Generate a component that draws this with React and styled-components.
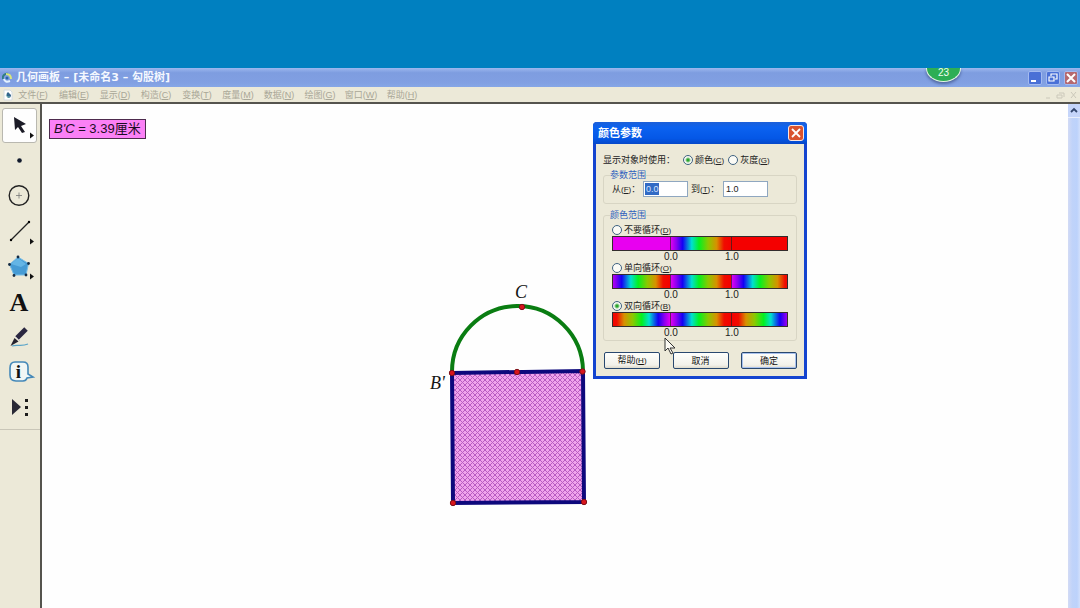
import React from "react";
import styled, { createGlobalStyle, css } from "styled-components";

const GlobalStyle = createGlobalStyle`
  * { box-sizing: border-box; }
  body {
    margin: 0;
    background: #fefefe;
    font-family: "Liberation Sans", "Noto Sans CJK SC", sans-serif;
    overflow: hidden;
  }
  button, input { font-family: inherit; }
`;

const Page = styled.div`
  display: flex;
  flex-direction: column;
  min-height: 100vh;
`;

const TopBand = styled.header`
  height: 68px;
  background: #0080c0;
`;

const TitleBar = styled.div`
  position: relative;
  display: flex;
  align-items: center;
  gap: 4px;
  height: 19px;
  padding: 0 2px;
  background: linear-gradient(#9db8ee, #7e9de0 25%, #819fe2 75%, #86a6e6);
`;

const WindowTitle = styled.h1`
  flex: 1;
  margin: 0;
  color: #f4f8ff;
  font: bold 11px/18px "DejaVu Sans", "Noto Sans CJK SC", sans-serif;
  white-space: pre;
`;

const WindowButton = styled.button`
  display: flex;
  align-items: center;
  justify-content: center;
  width: 14px;
  height: 14px;
  padding: 0;
  border: 1px solid #a3baf0;
  border-radius: 2px;
  background: ${(p) => (p.$close ? "#b5686f" : "#4a70d6")};
`;

const Badge = styled.div`
  position: absolute;
  top: 0;
  right: 119px;
  width: 35px;
  height: 14px;
  border: 1px solid #e4f3e6;
  border-top: 0;
  border-radius: 0 0 18px 18px / 0 0 14px 14px;
  background: #2dae55;
  box-shadow: 0 2px 3px #5067a0;
  color: #f2fff2;
  font-size: 10px;
  line-height: 10px;
  text-align: center;
`;

const MenuBar = styled.nav`
  display: flex;
  align-items: center;
  height: 17px;
  padding: 0 3px;
  background: #ece9d8;
  border-bottom: 2px solid #55544e;
`;

const MenuList = styled.div`
  display: flex;
  flex: 1;
  gap: 7px;
  padding-left: 3px;
`;

const MenuItem = styled.button`
  width: 34px;
  padding: 0;
  border: 0;
  background: none;
  color: #a9a797;
  font-size: 9px;
  line-height: 14px;
  white-space: nowrap;
  text-align: center;
`;

const DocumentButtons = styled.div`
  display: flex;
  gap: 5px;
`;

const Workspace = styled.main`
  display: flex;
  flex: 1;
`;

const ToolBox = styled.aside`
  width: 42px;
  background: #ece9d8;
  border-right: 2px solid #55544e;
`;

const ToolList = styled.div`
  display: flex;
  flex-direction: column;
  padding: 4px 3px 6px 2px;
  border-bottom: 1px solid #c9c6b8;
`;

const ToolButton = styled.button`
  width: 35px;
  height: 35px;
  padding: 0;
  border: 1px solid ${(p) => (p.$active ? "#b9b8b0" : "transparent")};
  border-radius: 3px;
  background: ${(p) => (p.$active ? "#fefefe" : "none")};
  svg { display: block; }
  & + & { margin-top: 1px; height: 34px; }
`;

const Canvas = styled.section`
  position: relative;
  flex: 1;
  background: #fefefe;
`;

const Drawing = styled.svg`
  display: block;
  position: absolute;
  left: 378px;
  top: 166px;
`;

const Measurement = styled.output`
  position: absolute;
  left: 7px;
  top: 15px;
  padding: 0 4px;
  border: 1px solid #4d2a4d;
  background: #fb80f6;
  color: #1c0d24;
  font-size: 13px;
  line-height: 18px;
  white-space: nowrap;
`;

const ScrollTrack = styled.div`
  width: 12px;
  background: linear-gradient(90deg, #d3dbf5, #c0d3f9 35%, #bcd2fb 75%, #d2dffa);
`;

const ScrollButton = styled.button`
  display: block;
  width: 12px;
  height: 14px;
  padding: 0 0 0 2px;
  border: 0;
  border-bottom: 1px solid #e8eefc;
  background: #c5d5fa;
  svg { display: block; }
`;

const Dialog = styled.form`
  position: absolute;
  left: 551px;
  top: 18px;
  width: 214px;
  border: 3px solid #1444cf;
  border-top: 0;
  border-radius: 4px 4px 0 0;
  background: #ece9d8;
  color: #222;
  font-size: 9px;
  line-height: 12px;
  white-space: nowrap;
`;

const DialogTitle = styled.div`
  display: flex;
  align-items: center;
  justify-content: space-between;
  height: 22px;
  margin: 0 -3px;
  padding: 0 3px 0 5px;
  border-radius: 4px 4px 0 0;
  background: linear-gradient(#1c5fd8, #0b62f0 25%, #0457e6 75%, #0648c8);
  h2 { margin: 0; color: #fff; font-size: 11px; line-height: 20px; }
`;

const DialogClose = styled.button`
  display: flex;
  align-items: center;
  justify-content: center;
  width: 16px;
  height: 16px;
  padding: 0;
  border: 1px solid #fbe5dd;
  border-radius: 3px;
  background: #d9532f;
`;

const DialogBody = styled.div`
  padding: 10px 7px 7px;
`;

const OptionRow = styled.div`
  display: flex;
  align-items: center;
  height: 12px;
  margin-bottom: 4px;
`;

const Caption = styled.span`
  width: 80px;
`;

const RadioLabel = styled.label`
  display: flex;
  align-items: center;
  gap: 2px;
  height: 12px;
  margin-right: 4px;
`;

const KeyHint = styled.span`
  font-size: 8px;
`;

const Radio = styled.input`
  appearance: none;
  width: 10px;
  height: 10px;
  margin: 0;
  border: 1px solid #3f6281;
  border-radius: 50%;
  background: #fbfbf6;
  &:checked { background: radial-gradient(circle, #2ba52e 1px, #f7f9f2 3px); }
`;

const Group = styled.fieldset`
  min-width: 0;
  margin: 0 0 ${(p) => (p.$last ? "11px" : "6px")};
  padding: ${(p) => (p.$last ? "4px 8px 2px" : "1px 8px 6px")};
  border: 1px solid #d8d5c4;
  border-radius: 3px;
`;

const Legend = styled.legend`
  padding: 0;
  margin-left: -2px;
  color: #2f5fbe;
  line-height: 10px;
`;

const RangeRow = styled.div`
  display: flex;
  align-items: center;
  label { width: 31px; }
  label:last-of-type { width: 35px; padding-left: 3px; }
`;

const NumberBox = styled.input`
  width: 45px;
  height: 16px;
  padding: 0 2px;
  border: 1px solid #8fa7c0;
  border-radius: 0;
  background: #fff;
  color: #222;
  font-size: 9px;
`;

const SelectedBox = styled.div`
  position: relative;
  display: flex;
  &::before {
    content: "";
    position: absolute;
    inset: 2px auto 2px 2px;
    width: 14px;
    background: #316ac5;
  }
  input { position: relative; background: transparent; color: #d6e4ff; }
  background: #fff;
`;

const spectrum = [
  ["#e800f0", 0],
  ["#8a00f0", 10],
  ["#1400f4", 20],
  ["#00e0d0", 35],
  ["#04f020", 47],
  ["#8cc800", 62],
  ["#d89000", 76],
  ["#f00c00", 88],
  ["#f40000", 100],
];
const FIRST = 33;
const SPAN = 35;

const place = (colour, share) => `${colour} ${FIRST + (share / 100) * SPAN}%`;
const forward = spectrum.map(([c, s]) => place(c, s));
const shifted = (turn) => spectrum.map(([c, s]) => place(c, s + turn * 100));
const mirrored = (turn) =>
  [...spectrum].reverse().map(([c, s]) => place(c, turn * 100 - s));

const gradients = {
  none: forward,
  oneWay: [...shifted(-1), ...shifted(0), ...shifted(1)],
  twoWay: [...mirrored(0), ...shifted(0), ...mirrored(2)],
};

const SpectrumBar = styled.div`
  height: 15px;
  border: 1px solid #332d2d;
  background:
    linear-gradient(#222a, #222a) 33% 0 / 1px 100% no-repeat,
    linear-gradient(#222a, #222a) 68% 0 / 1px 100% no-repeat,
    linear-gradient(90deg, ${(p) => gradients[p.$cycle].join(", ")});
`;

const Scale = styled.div`
  display: grid;
  grid-template-columns: 52px 16px 45px 16px;
  height: 11px;
  font-size: 10px;
  line-height: 12px;
  span:first-child { grid-column: 2; }
  span:last-child { grid-column: 4; }
`;

const ButtonRow = styled.div`
  display: flex;
  justify-content: space-between;
  padding-left: 1px;
`;

const PushButton = styled.button`
  width: 56px;
  height: 17px;
  padding: 0;
  border: 1px solid #29486f;
  border-radius: 2px;
  background: linear-gradient(#fefefc, #f2f1ea 80%, #dedacb);
  color: #111;
  font-size: 9px;
  line-height: 14px;
  ${(p) => p.$primary && css`box-shadow: inset 0 0 0 1px #a9c2ee;`}
`;

const Pointer = styled.svg`
  position: absolute;
  left: 622px;
  top: 233px;
`;

const menus = [
  ["文件", "F"], ["编辑", "E"], ["显示", "D"], ["构造", "C"], ["变换", "T"],
  ["度量", "M"], ["数据", "N"], ["绘图", "G"], ["窗口", "W"], ["帮助", "H"],
];

const Key = ({ k }) => <KeyHint>(<u>{k}</u>)</KeyHint>;

const Flyout = () => <path d="M27 23.500v6l4-3z" fill="#111" />;

const tools = [
  ["选择", <><path d="M11 8l12 7-5 2 4 6-3 1-4-6-3 3z" fill="#1b1b26" /><Flyout /></>],
  ["点", <circle cx="16.500" cy="15.500" r="2.300" fill="#111a2c" />],
  ["圆", <><circle cx="16" cy="15.500" r="9.800" fill="none" stroke="#222" strokeWidth="1.400" /><path d="M13 15.500h6M16 12.500v6" stroke="#777" strokeWidth=".8" /></>],
  ["直线", <><path d="M8 25L26 7" stroke="#222" strokeWidth="1.200" /><circle cx="8" cy="25" r="1.200" /><circle cx="26" cy="7" r="1.200" /><Flyout /></>],
  ["多边形", <><path d="M15 7l10.500 6.500-2.500 11.500H11L6.500 14.500z" fill="#469bd4" stroke="#76bce6" /><path d="M15 8l8 6-5 3-10-3z" fill="#64b5e5" /><g fill="#142b43"><circle cx="15" cy="7" r="1.400" /><circle cx="25.500" cy="13.500" r="1.400" /><circle cx="23" cy="25" r="1.400" /><circle cx="11" cy="25.500" r="1.400" /><circle cx="6.500" cy="14.500" r="1.400" /></g><Flyout /></>],
  ["文本", <text x="16" y="26" textAnchor="middle" fontFamily="Liberation Serif, serif" fontWeight="bold" fontSize="26" fill="#111">A</text>],
  ["标记", <><path d="M9 26c5-2 9 1 16-2" fill="none" stroke="#5ba5c9" strokeWidth="1.300" /><path d="M14 18L23 9" stroke="#2a2740" strokeWidth="5" /><path d="M11.500 18l4 3.500L7.500 26z" fill="#24222f" /><path d="M12.500 16.500l4 4" stroke="#a5a3b2" strokeWidth="1" /></>],
  ["信息", <><path d="M12 7h8q5 0 5 5v7l5 3-6 1q-1 3-4 3h-7q-6 0-6-6v-7q0-6 5-6z" fill="#f1f6f5" stroke="#4488b8" strokeWidth="1.600" /><text x="15.500" y="23" textAnchor="middle" fontFamily="Liberation Serif, serif" fontWeight="bold" fontSize="19" fill="#111">i</text></>],
  ["自定义", <><path d="M9 9l9 8-9 8z" fill="#292936" /><path d="M22 9h3v3h-3zM22 16h3v3h-3zM22 23h3v3h-3z" fill="#1c1c1c" /></>],
];

const cycles = [
  ["none", "不要循环", "D"],
  ["oneWay", "单向循环", "O"],
  ["twoWay", "双向循环", "B"],
];

function Construction() {
  return (
    <Drawing width="220" height="250" viewBox="420 270 220 250" aria-label="勾股树">
      <defs>
        <pattern id="hatch" width="5" height="5" patternUnits="userSpaceOnUse">
          <rect width="5" height="5" fill="#f0a4ec" />
          <path d="M0 0l5 5M5 0L0 5" stroke="#b85cc2" strokeWidth="1" />
        </pattern>
      </defs>
      <path d="M452 373l131-2 1 131-131 1z" fill="url(#hatch)" stroke="#0d087c" strokeWidth="4" />
      <path d="M452 372a65.500 65.500 0 0 1 131-1" fill="none" stroke="#0a7d12" strokeWidth="4" />
      <g fill="#d8151c" stroke="#7c1018" strokeWidth="1">
        <circle cx="452" cy="373" r="2.700" />
        <circle cx="517" cy="372" r="2.700" />
        <circle cx="582.500" cy="371.500" r="2.700" />
        <circle cx="522" cy="307" r="2.700" />
        <circle cx="453" cy="503" r="2.700" />
        <circle cx="584" cy="502" r="2.700" />
      </g>
      <g fontFamily="Liberation Serif, serif" fontStyle="italic" fontSize="18" fill="#151515">
        <text x="515" y="298">C</text>
        <text x="430" y="389">B'</text>
      </g>
    </Drawing>
  );
}

function ColourDialog() {
  return (
    <Dialog onSubmit={(e) => e.preventDefault()}>
      <DialogTitle>
        <h2>颜色参数</h2>
        <DialogClose type="button" aria-label="关闭">
          <svg width="12" height="12"><path d="M2 2l8 8M10 2l-8 8" stroke="#fff" strokeWidth="1.800" /></svg>
        </DialogClose>
      </DialogTitle>
      <DialogBody>
        <OptionRow>
          <Caption>显示对象时使用：</Caption>
          <RadioLabel><Radio type="radio" name="mode" defaultChecked /><span>颜色<Key k="C" /></span></RadioLabel>
          <RadioLabel><Radio type="radio" name="mode" /><span>灰度<Key k="G" /></span></RadioLabel>
        </OptionRow>
        <Group>
          <Legend>参数范围</Legend>
          <RangeRow>
            <label htmlFor="from">从<Key k="F" />：</label>
            <SelectedBox><NumberBox id="from" defaultValue="0.0" /></SelectedBox>
            <label htmlFor="to">到<Key k="T" />：</label>
            <NumberBox id="to" defaultValue="1.0" />
          </RangeRow>
        </Group>
        <Group $last>
          <Legend>颜色范围</Legend>
          {cycles.map(([cycle, name, key]) => (
            <div key={cycle}>
              <RadioLabel>
                <Radio type="radio" name="cycle" defaultChecked={cycle === "twoWay"} />
                <span>{name}<Key k={key} /></span>
              </RadioLabel>
              <SpectrumBar $cycle={cycle} />
              <Scale><span>0.0</span><span>1.0</span></Scale>
            </div>
          ))}
        </Group>
        <ButtonRow>
          <PushButton type="button">帮助<Key k="H" /></PushButton>
          <PushButton type="button">取消</PushButton>
          <PushButton $primary>确定</PushButton>
        </ButtonRow>
      </DialogBody>
    </Dialog>
  );
}

export default function App() {
  return (
    <Page>
      <GlobalStyle />
      <TopBand />
      <TitleBar>
        <svg width="10" height="12" viewBox="0 0 10 12">
          <path d="M1 7a4 4 0 0 1 5-5" stroke="#327d82" strokeWidth="2" fill="none" />
          <path d="M4 2q5 0 5 5" stroke="#d8e77c" strokeWidth="2" fill="none" />
          <path d="M2 7q1 4 6 2" stroke="#e3f3ff" strokeWidth="2" fill="none" />
          <circle cx="5" cy="6" r="1.500" fill="#2767a8" />
        </svg>
        <WindowTitle>几何画板 – [未命名3 – 勾股树]</WindowTitle>
        <Badge>23</Badge>
        <WindowButton aria-label="最小化"><svg width="12" height="12"><path d="M2 9h5" stroke="#fff" strokeWidth="2" /></svg></WindowButton>
        <WindowButton aria-label="还原"><svg width="12" height="12" fill="none" stroke="#fff" strokeWidth="1.200"><path d="M4 4V2h6v5H8M2 5h5v4H2z" /></svg></WindowButton>
        <WindowButton $close aria-label="关闭"><svg width="12" height="12"><path d="M2 2l8 8M10 2l-8 8" stroke="#fff" strokeWidth="2" /></svg></WindowButton>
      </TitleBar>
      <MenuBar>
        <svg width="10" height="12" viewBox="0 0 10 12">
          <path d="M1 1h6l2 2v8H1z" fill="#fff" stroke="#d6dce0" />
          <path d="M5 3q-3 2 0 6 3 0 3-3" fill="#33658d" />
          <path d="M3 6q1 3 4 2" fill="none" stroke="#7cbcbb" />
        </svg>
        <MenuList>
          {menus.map(([name, key]) => <MenuItem key={key}>{name}(<u>{key}</u>)</MenuItem>)}
        </MenuList>
        <DocumentButtons>
          <svg width="34" height="12" fill="none" stroke="#cbc8ba"><path d="M3 9h4M16 4h5v4M14 6h5v3h-5zM28 3l5 6M33 3l-5 6" /></svg>
        </DocumentButtons>
      </MenuBar>
      <Workspace>
        <ToolBox>
          <ToolList>
            {tools.map(([name, drawing], i) => (
              <ToolButton key={name} $active={i === 0} aria-label={name}>
                <svg width="33" height="33" viewBox="0 0 33 33">{drawing}</svg>
              </ToolButton>
            ))}
          </ToolList>
        </ToolBox>
        <Canvas>
          <Measurement><i>B'C</i> = 3.39厘米</Measurement>
          <Construction />
          <ColourDialog />
          <Pointer width="12" height="18" viewBox="0 0 12 18">
            <path d="M1 1v13l3-3 3 6 2-1-3-5h5z" fill="#fbfaf3" stroke="#333" />
          </Pointer>
        </Canvas>
        <ScrollTrack>
          <ScrollButton aria-label="向上滚动">
            <svg width="8" height="8"><path d="M1 5l3-3 3 3" fill="none" stroke="#33476f" strokeWidth="1.800" /></svg>
          </ScrollButton>
        </ScrollTrack>
      </Workspace>
    </Page>
  );
}
